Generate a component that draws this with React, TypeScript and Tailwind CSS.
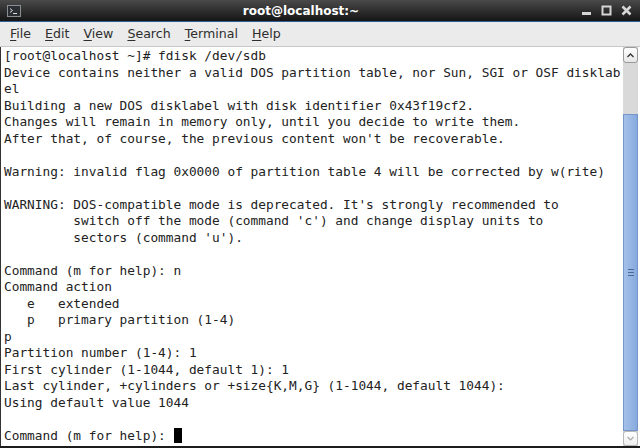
import React from 'react'

const lines = [
  '[root@localhost ~]# fdisk /dev/sdb',
  'Device contains neither a valid DOS partition table, nor Sun, SGI or OSF disklab',
  'el',
  'Building a new DOS disklabel with disk identifier 0x43f19cf2.',
  'Changes will remain in memory only, until you decide to write them.',
  "After that, of course, the previous content won't be recoverable.",
  '',
  'Warning: invalid flag 0x0000 of partition table 4 will be corrected by w(rite)',
  '',
  "WARNING: DOS-compatible mode is deprecated. It's strongly recommended to",
  "         switch off the mode (command 'c') and change display units to",
  "         sectors (command 'u').",
  '',
  'Command (m for help): n',
  'Command action',
  '   e   extended',
  '   p   primary partition (1-4)',
  'p',
  'Partition number (1-4): 1',
  'First cylinder (1-1044, default 1): 1',
  'Last cylinder, +cylinders or +size{K,M,G} (1-1044, default 1044):',
  'Using default value 1044',
  '',
]

const menus: [string, string][] = [
  ['F', 'ile'],
  ['E', 'dit'],
  ['V', 'iew'],
  ['S', 'earch'],
  ['T', 'erminal'],
  ['H', 'elp'],
]

function TermIcon() {
  return (
    <svg width="14" height="12" viewBox="0 0 14 12">
      <rect x="0.5" y="0.5" width="13" height="11" fill="#2b2f33" stroke="#8a8f94" />
      <path d="M3 3.5 L5.5 5.5 L3 7.5" stroke="#d8dde0" fill="none" strokeWidth="1" />
      <path d="M6 8.5 H10" stroke="#d8dde0" strokeWidth="1" />
    </svg>
  )
}

export default function App() {
  return (
    <div className="flex h-[448px] w-[640px] flex-col overflow-hidden bg-[#1c1c1c]">
      {/* title bar */}
      <div className="flex h-[21px] items-center bg-gradient-to-b from-[#4a4a4a] to-[#161616] px-[7px]">
        <TermIcon />
        <div className="flex-1 text-center font-['DejaVu_Sans',sans-serif] text-[12px] font-bold leading-none text-white">
          root@localhost:~
        </div>
        <div className="flex items-center gap-[9px] pr-[1px]">
          <svg width="11" height="11" viewBox="0 0 11 11">
            <rect x="1" y="7" width="9" height="3" fill="#d6d6d6" />
          </svg>
          <svg width="11" height="11" viewBox="0 0 11 11">
            <rect x="1.5" y="1.5" width="8" height="8" fill="none" stroke="#d6d6d6" strokeWidth="2" />
          </svg>
          <svg width="11" height="11" viewBox="0 0 11 11">
            <path d="M1.5 1.5 L9.5 9.5 M9.5 1.5 L1.5 9.5" stroke="#d6d6d6" strokeWidth="2.5" />
          </svg>
        </div>
      </div>
      <div className="h-px bg-[#2f5d9a]" />

      {/* menu bar */}
      <div className="flex h-[25px] items-center border-b border-[#c8c8c8] bg-[#ebebeb] pl-[3px] font-['DejaVu_Sans',sans-serif] text-[12.6px] text-[#2e2e2e]">
        {menus.map(([m, rest]) => (
          <span key={m + rest} className="px-[7px]">
            <span className="underline underline-offset-2">{m}</span>
            {rest}
          </span>
        ))}
      </div>

      {/* terminal */}
      <div className="flex min-h-0 flex-1 border-l border-[#333] bg-white">
        <div className="flex-1 overflow-hidden pl-[3px] pt-[1px] font-['DejaVu_Sans_Mono',monospace] text-[12.8px] leading-[16.5px] whitespace-pre text-[#222]">
          {lines.map((l, i) => (
            <div key={i} className="h-[16.5px]">
              {l}
            </div>
          ))}
          <div className="flex h-[16.5px] items-center">
            <span>Command (m for help): </span>
            <span className="inline-block h-[15px] w-[8px] bg-black" />
          </div>
        </div>

        {/* scrollbar */}
        <div className="mr-[2px] flex w-[15px] flex-col bg-[#d9d9d9]">
          <div className="flex h-[16px] items-center justify-center rounded-[3px] border border-[#9a9a9a] bg-gradient-to-b from-white to-[#e6e6e6]">
            <svg width="7" height="5" viewBox="0 0 7 5">
              <path d="M0.5 4 L3.5 1 L6.5 4" stroke="#333" strokeWidth="1.3" fill="none" />
            </svg>
          </div>
          <div className="h-[51px]" />
          <div className="flex flex-1 flex-col items-center justify-center gap-[2px] border border-[#7496c8] bg-gradient-to-r from-[#a5c1ea] to-[#86a9dd]">
            <div className="h-px w-[6px] bg-[#4e6a94]" />
            <div className="h-px w-[6px] bg-[#4e6a94]" />
            <div className="h-px w-[6px] bg-[#4e6a94]" />
          </div>
          <div className="flex h-[15px] items-center justify-center rounded-[3px] border border-[#b8b8b8] bg-gradient-to-b from-white to-[#f0f0f0]">
            <svg width="7" height="5" viewBox="0 0 7 5">
              <path d="M0.5 1 L3.5 4 L6.5 1" stroke="#aaa" strokeWidth="1.2" fill="none" />
            </svg>
          </div>
        </div>
      </div>
      <div className="h-[2px] bg-[#1c1c1c]" />
    </div>
  )
}
